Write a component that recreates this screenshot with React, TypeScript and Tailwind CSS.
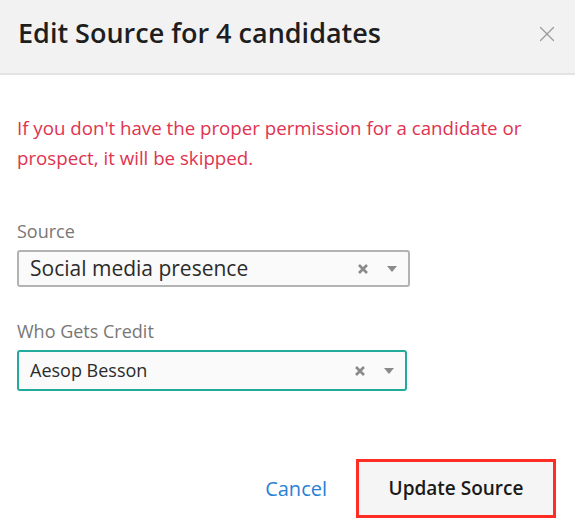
import { X } from "lucide-react";

function SelectBox({
  value,
  focused,
  width,
  height,
  textSize,
}: {
  value: string;
  focused?: boolean;
  width: string;
  height: string;
  textSize: string;
}) {
  return (
    <div
      className={`flex items-center rounded-[3px] bg-[#fafafa] ${width} ${height} ${
        focused ? "border-2 border-[#22ab9c]" : "border-2 border-[#b3b3b3]"
      }`}
    >
      <span className={`flex-1 pl-[11px] text-[#2b2b2b] ${textSize}`}>{value}</span>
      <svg width="12" height="12" viewBox="0 0 12 12" className="mr-[17px]">
        <path d="M2 2 L10 10 M10 2 L2 10" stroke="#8a8a8a" strokeWidth="2.6" strokeLinecap="butt" />
      </svg>
      <svg width="12" height="8" viewBox="0 0 12 8" className="mr-[10px]">
        <path d="M1 1 L11 1 L6 7 Z" fill="#8a8a8a" />
      </svg>
    </div>
  );
}

export default function App() {
  return (
    <div
      className="w-[575px] h-[530px] bg-white overflow-hidden"
      style={{ fontFamily: '"Open Sans", "Noto Sans", sans-serif' }}
    >
      {/* Header */}
      <div className="h-[75px] bg-[#f2f2f2] border-b-2 border-[#e3e3e3] flex items-center justify-between pl-[18px] pr-[15px] pb-[6px]">
        <h1 className="text-[27px] font-semibold text-[#1e1e1e]">
          Edit Source for 4 candidates
        </h1>
        <X className="w-[26px] h-[26px] text-[#9a9a9a]" strokeWidth={1.1} />
      </div>

      {/* Body */}
      <div className="px-[17px] pt-[38px]">
        <p className="text-[18.7px] leading-[30px] text-[#e0334f] pr-[20px]">
          If you don't have the proper permission for a candidate or prospect, it will be skipped.
        </p>

        <div className="mt-[45px]">
          <div className="text-[18px] text-[#777777] mb-[5px]">Source</div>
          <SelectBox value="Social media presence" width="w-[393px]" height="h-[37px]" textSize="text-[21px]" />
        </div>

        <div className="mt-[31px]">
          <div className="text-[18px] text-[#777777] mb-[5px]">Who Gets Credit</div>
          <SelectBox value="Aesop Besson" focused width="w-[390px]" height="h-[41px]" textSize="text-[18px]" />
        </div>
      </div>

      {/* Footer */}
      <div className="flex items-center justify-end gap-[29px] pr-[19px] mt-[68px]">
        <button className="text-[20px] text-[#2a7fd4]">Cancel</button>
        <button className="w-[200px] h-[59px] border-[3px] border-[#ff2e24] bg-[#f5f5f5] text-[19px] font-semibold text-[#1a1a1a]">
          Update Source
        </button>
      </div>
    </div>
  );
}
